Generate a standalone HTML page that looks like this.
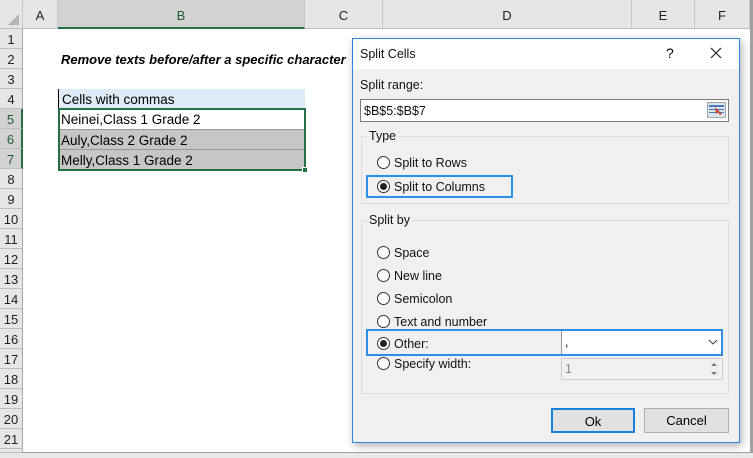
<!DOCTYPE html>
<html><head><style>
*{margin:0;padding:0;box-sizing:border-box}
body{width:753px;height:458px;background:#fff;position:relative;overflow:hidden;font-family:"Liberation Sans",sans-serif;font-size:13px;color:#000}
.a{position:absolute}
.ch{position:absolute;top:0;height:29px;background:#e6e6e6;border-right:1px solid #c8c8c8;border-bottom:1px solid #bdbdbd;text-align:center;line-height:31px;font-size:13px;color:#222}
.rh{position:absolute;left:0;width:23px;height:20px;background:#e6e6e6;border-bottom:1px solid #bdbdbd;border-right:1px solid #a8a8a8;text-align:center;line-height:21px;font-size:13px;color:#222}
.cell{position:absolute;left:58px;width:247px;height:20px;line-height:22px;padding-left:3px;font-size:13.5px}
.dl{font-size:12.5px;color:#111}
.rad{position:absolute;width:13px;height:13px;border:1px solid #333;border-radius:50%;background:#fff}
.rad.on::after{content:"";position:absolute;left:2px;top:2px;width:7px;height:7px;border-radius:50%;background:#222}
.grp{position:absolute;border:1px solid #dcdcdc}
.btn{position:absolute;height:25px;background:#e1e1e1;border:1px solid #adadad;text-align:center;line-height:23px;font-size:13px}
</style></head><body>
<div class="ch" style="left:0;width:23px;background:#e6e6e6"></div>
<svg class="a" style="left:8px;top:14px" width="12" height="12"><polygon points="11,0 11,11 0,11" fill="#b4b4b4"/></svg>
<div class="ch" style="left:23px;width:35px">A</div>
<div class="ch" style="left:58px;width:247px;background:#d2d2d2;border-bottom:2px solid #217346;color:#1e5a3a">B</div>
<div class="ch" style="left:305px;width:78px">C</div>
<div class="ch" style="left:383px;width:249px">D</div>
<div class="ch" style="left:632px;width:63px">E</div>
<div class="ch" style="left:695px;width:55px">F</div>
<div class="a" style="left:750px;top:0;width:3px;height:458px;background:#a0a0a0"></div>
<div class="a" style="left:0;top:452px;width:753px;height:6px;background:#e8e8e8;border-top:1px solid #a0a0a0"></div>
<div class="rh" style="top:29px">1</div><div class="rh" style="top:49px">2</div><div class="rh" style="top:69px">3</div><div class="rh" style="top:89px">4</div>
<div class="rh" style="top:109px;background:#d2d2d2;color:#1e5a3a;border-right:2px solid #217346">5</div>
<div class="rh" style="top:129px;background:#d2d2d2;color:#1e5a3a;border-right:2px solid #217346">6</div>
<div class="rh" style="top:149px;background:#d2d2d2;color:#1e5a3a;border-right:2px solid #217346">7</div>
<div class="rh" style="top:169px">8</div><div class="rh" style="top:189px">9</div><div class="rh" style="top:209px">10</div><div class="rh" style="top:229px">11</div><div class="rh" style="top:249px">12</div><div class="rh" style="top:269px">13</div><div class="rh" style="top:289px">14</div><div class="rh" style="top:309px">15</div><div class="rh" style="top:329px">16</div><div class="rh" style="top:349px">17</div><div class="rh" style="top:369px">18</div><div class="rh" style="top:389px">19</div><div class="rh" style="top:409px">20</div><div class="rh" style="top:429px">21</div><div class="rh" style="top:449px;height:4px"></div>
<div class="a" style="left:61px;top:52px;font-weight:bold;font-style:italic;font-size:13px">Remove texts before/after a specific character</div>
<div class="cell" style="top:89px;background:#ddebf7;border-left:1px solid #000;border-bottom:1px solid #9bc2e6">Cells with commas</div>
<div class="cell" style="top:109px;background:#fff">Neinei,Class 1 Grade 2</div>
<div class="cell" style="top:129px;background:#c6c6c6;border-top:1px solid #999">Auly,Class 2 Grade 2</div>
<div class="cell" style="top:149px;background:#c6c6c6;border-top:1px solid #999">Melly,Class 1 Grade 2</div>
<div class="a" style="left:58px;top:108px;width:248px;height:63px;border:2px solid #217346"></div>
<div class="a" style="left:302px;top:167px;width:6px;height:6px;background:#217346;border:1px solid #fff"></div>

<div class="a" style="left:352px;top:38px;width:388px;height:405px;background:#f0f0f0;border:1px solid #2b87d8;box-shadow:2px 3px 8px rgba(0,0,0,.3)"></div>
<div class="a" style="left:353px;top:39px;width:386px;height:30px;background:#fff"></div>
<div class="a dl" style="left:360px;top:47px">Split Cells</div>
<div class="a" style="left:666px;top:45px;font-size:14px">?</div>
<svg class="a" style="left:710px;top:47px" width="12" height="12"><path d="M1 1L11 11M11 1L1 11" stroke="#222" stroke-width="1.2"/></svg>
<div class="a dl" style="left:360px;top:78px">Split range:</div>
<div class="a" style="left:360px;top:99px;width:369px;height:23px;background:#fff;border:1px solid #7a7a7a"></div>
<div class="a dl" style="left:364px;top:104px">$B$5:$B$7</div>
<div class="a" style="left:707px;top:102px;width:19px;height:16px;background:#dde3ea;border:1px solid #9aa"></div>
<svg class="a" style="left:709px;top:104px" width="16" height="12"><rect x="0" y="1" width="15" height="2" fill="#4a78b8"/><rect x="0" y="5" width="15" height="1" fill="#4a78b8"/><rect x="0" y="8" width="15" height="1" fill="#4a78b8"/><path d="M6 3L13 10L11 11L9 8L7 10Z" fill="#d53a2a"/></svg>
<div class="grp" style="left:361px;top:136px;width:368px;height:68px"></div>
<div class="a dl" style="left:367px;top:129px;background:#f0f0f0;padding:0 2px">Type</div>
<div class="rad" style="left:377px;top:156px"></div><div class="a dl" style="left:394px;top:156px">Split to Rows</div>
<div class="a" style="left:366px;top:175px;width:147px;height:23px;border:2px solid #2e8ee6"></div>
<div class="rad on" style="left:377px;top:180px"></div><div class="a dl" style="left:394px;top:180px">Split to Columns</div>
<div class="grp" style="left:361px;top:220px;width:368px;height:174px"></div>
<div class="a dl" style="left:367px;top:213px;background:#f0f0f0;padding:0 2px">Split by</div>
<div class="rad" style="left:377px;top:246px"></div><div class="a dl" style="left:394px;top:246px">Space</div>
<div class="rad" style="left:377px;top:269px"></div><div class="a dl" style="left:394px;top:269px">New line</div>
<div class="rad" style="left:377px;top:292px"></div><div class="a dl" style="left:394px;top:292px">Semicolon</div>
<div class="rad" style="left:377px;top:315px"></div><div class="a dl" style="left:394px;top:315px">Text and number</div>
<div class="a" style="left:561px;top:330px;width:161px;height:25px;background:#fff;border-left:1px solid #999"></div>
<div class="a" style="left:366px;top:329px;width:357px;height:27px;border:2px solid #2e8ee6"></div>
<div class="rad on" style="left:377px;top:337px"></div><div class="a dl" style="left:394px;top:337px">Other:</div>
<div class="a dl" style="left:565px;top:335px">,</div>
<svg class="a" style="left:708px;top:339px" width="10" height="7"><path d="M1 1L5 5L9 1" stroke="#444" fill="none"/></svg>
<div class="rad" style="left:377px;top:357px"></div><div class="a dl" style="left:394px;top:357px">Specify width:</div>
<div class="a" style="left:561px;top:358px;width:162px;height:22px;border:1px solid #ccc;background:#f0f0f0"></div>
<div class="a dl" style="left:565px;top:362px;color:#888">1</div>
<svg class="a" style="left:709px;top:361px" width="10" height="16"><path d="M2 5L5 2L8 5Z M2 11L5 14L8 11Z" fill="#777"/></svg>
<div class="btn" style="left:551px;top:408px;width:84px;border:2px solid #1a7fdb">Ok</div>
<div class="btn" style="left:644px;top:408px;width:85px">Cancel</div>
</body></html>
